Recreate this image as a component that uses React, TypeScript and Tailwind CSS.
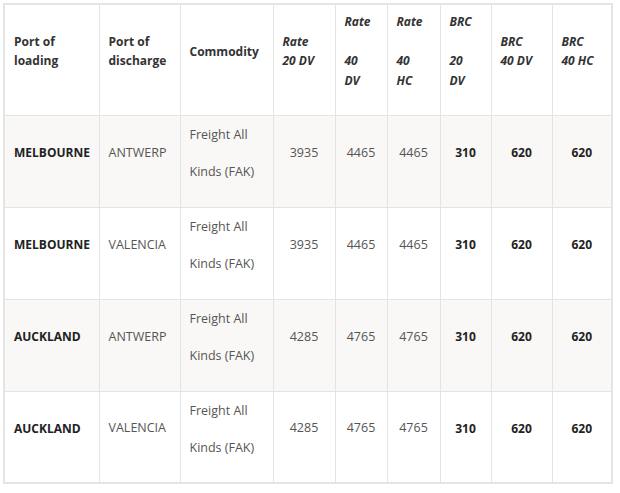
const WIDTHS = [95, 81, 93, 62, 52, 53, 51, 61, 60];

const ROWS = [
  { from: "MELBOURNE", to: "ANTWERP", r20: 3935, r40: 4465, r40hc: 4465 },
  { from: "MELBOURNE", to: "VALENCIA", r20: 3935, r40: 4465, r40hc: 4465 },
  { from: "AUCKLAND", to: "ANTWERP", r20: 4285, r40: 4765, r40hc: 4765 },
  { from: "AUCKLAND", to: "VALENCIA", r20: 4285, r40: 4765, r40hc: 4765 },
];

const th =
  "border border-[#e4e4e4] px-[9px] pb-[17px] text-left align-middle font-bold leading-[19.5px] text-[#333]";
const td = "border border-[#e4e4e4] px-[9px] pb-4 align-middle";
const plain = "text-[12.5px] text-[#555]";

export default function App() {
  return (
    <div className="min-h-[493px] bg-white pt-[3px] pl-[3px] font-['Open_Sans',sans-serif] text-[12px]">
      <table className="table-fixed border-collapse border-2 border-[#e4e4e4] w-[610px]">
        <colgroup>
          {WIDTHS.map((w, i) => (
            <col key={i} style={{ width: w }} />
          ))}
        </colgroup>
        <thead>
          <tr className="h-[111px] bg-white">
            <th className={th}>
              Port of
              <br />
              loading
            </th>
            <th className={th}>
              Port of
              <br />
              discharge
            </th>
            <th className={th}>Commodity</th>
            <th className={`${th} italic`}>
              Rate
              <br />
              20 DV
            </th>
            <th className={`${th} italic`}>
              Rate
              <br />
              <br />
              40
              <br />
              DV
            </th>
            <th className={`${th} italic`}>
              Rate
              <br />
              <br />
              40
              <br />
              HC
            </th>
            <th className={`${th} italic`}>
              BRC
              <br />
              <br />
              20
              <br />
              DV
            </th>
            <th className={`${th} italic`}>
              BRC
              <br />
              40 DV
            </th>
            <th className={`${th} italic`}>
              BRC
              <br />
              40 HC
            </th>
          </tr>
        </thead>
        <tbody>
          {ROWS.map((r, i) => (
            <tr
              key={i}
              className={`h-[92px] ${i % 2 === 0 ? "bg-[#f9f8f6]" : "bg-white"}`}
            >
              <td className={`${td} font-bold text-[#222]`}>{r.from}</td>
              <td className={`${td} ${plain}`}>{r.to}</td>
              <td className={`${td} ${plain} leading-[37px]`}>
                Freight All
                <br />
                Kinds (FAK)
              </td>
              <td className={`${td} ${plain} text-center`}>{r.r20}</td>
              <td className={`${td} ${plain} text-center`}>{r.r40}</td>
              <td className={`${td} ${plain} text-center`}>{r.r40hc}</td>
              <td className={`${td} text-center font-bold text-[#222]`}>310</td>
              <td className={`${td} text-center font-bold text-[#222]`}>620</td>
              <td className={`${td} text-center font-bold text-[#222]`}>620</td>
            </tr>
          ))}
        </tbody>
      </table>
    </div>
  );
}
